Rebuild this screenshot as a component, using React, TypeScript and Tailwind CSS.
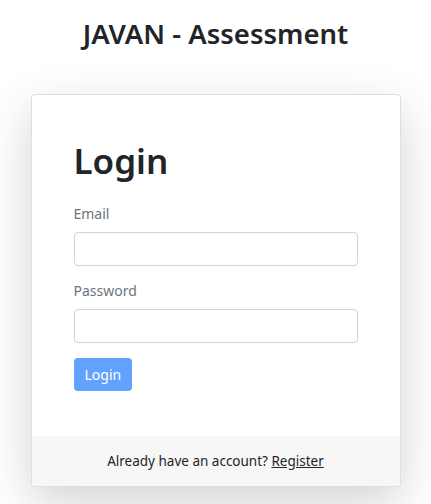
import type { FC } from 'react';

const fontStack = { fontFamily: '"Noto Sans", "Open Sans", sans-serif' };

export const App: FC = () => {
  return (
    <div className="min-h-screen bg-white text-[#212529]" style={fontStack}>
      <div className="flex flex-col items-center pt-[17px]">
        <h2 className="text-[27.5px] font-semibold leading-[1.2]">JAVAN - Assessment</h2>
        <div className="mt-[44px] w-[370px] overflow-hidden rounded-[4px] border border-[#dfdfdf] bg-white shadow-[0_16px_48px_rgba(0,0,0,0.175)]">
          <div className="px-[42px] pb-[45px] pt-[45px]">
            <h1 className="text-[35px] font-semibold leading-[1.2]">Login</h1>
            <form className="mt-[21px] flex flex-col">
              <label className="mb-[8px] text-[14px] text-[#6c757d]">Email</label>
              <input
                type="email"
                className="h-[34px] w-full rounded-[4px] border border-[#ced4da] px-3 text-[14px] outline-none"
              />
              <label className="mb-[8px] mt-[14px] text-[14px] text-[#6c757d]">Password</label>
              <input
                type="password"
                className="h-[34px] w-full rounded-[4px] border border-[#ced4da] px-3 text-[14px] outline-none"
              />
              <div className="mt-[15px]">
                <button
                  type="button"
                  className="h-[33px] rounded-[4px] bg-[#62a1fe] px-[11px] text-[14px] text-white"
                >
                  Login
                </button>
              </div>
            </form>
          </div>
          <div className="flex h-[50px] items-center justify-center bg-[#f7f7f7] text-[13.5px]">
            <span>
              Already have an account? <a href="#" className="underline">Register</a>
            </span>
          </div>
        </div>
      </div>
    </div>
  );
};

export default App;
